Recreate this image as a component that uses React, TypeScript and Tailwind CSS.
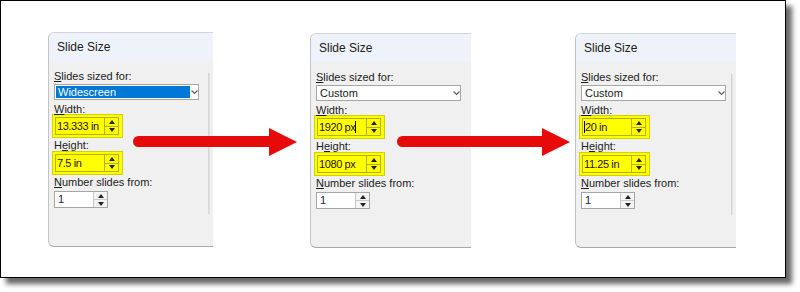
import React from "react";

const font = { fontFamily: '"Segoe UI", "Liberation Sans", Arial, sans-serif' };

function Spinner({ olive }: { olive?: boolean }) {
  return (
    <div
      className={`w-[14px] h-full flex flex-col border-l ${
        olive ? "border-[#b4b400]" : "border-[#c8c8c8] bg-[#f4f4f4]"
      }`}
    >
      <div className="flex-1 flex items-center justify-center">
        <svg width="6" height="4" viewBox="0 0 6 4">
          <path d="M0 4 L3 0 L6 4 Z" fill="#222" />
        </svg>
      </div>
      <div className={`h-px ${olive ? "bg-[#b4b400]" : "bg-[#c8c8c8]"}`} />
      <div className="flex-1 flex items-center justify-center">
        <svg width="6" height="4" viewBox="0 0 6 4">
          <path d="M0 0 L3 4 L6 0 Z" fill="#222" />
        </svg>
      </div>
    </div>
  );
}

function Caret() {
  return <span className="inline-block w-px h-[12px] bg-black align-middle" />;
}

function Label({ children }: { children: React.ReactNode }) {
  return <div className="h-[14px] leading-[14px] text-[11px] text-[#1b1b1b]">{children}</div>;
}

function HighlightField({
  value,
  caret,
}: {
  value: string;
  caret?: "start" | "end";
}) {
  return (
    <div className="-ml-[2px] w-[71px] h-[24px] bg-[#ffff00] border border-[#d2d200] pl-[2px] pt-[2px]">
      <div className="w-[64px] h-[18px] border border-[#b4b400] flex">
        <div className="flex-1 flex items-center pl-[1px] text-[11px] tracking-[-0.4px] text-[#2a1200]">
          {caret === "start" && <Caret />}
          <span>{value}</span>
          {caret === "end" && <Caret />}
        </div>
        <Spinner olive />
      </div>
    </div>
  );
}

function SlideSizePanel({
  preset,
  width,
  height,
  selected,
  caret,
  panelWidth,
  divider,
}: {
  preset: string;
  width: string;
  height: string;
  selected?: boolean;
  caret?: "start" | "end";
  panelWidth: string;
  divider?: boolean;
}) {
  return (
    <div
      className={`relative ${panelWidth} h-[215px] bg-[#f0f0f0] border-t border-l border-b border-t-[#d4d4d4] border-l-[#c4c4c4] border-b-[#a8a8a8] rounded-l-[6px] overflow-hidden`}
    >
      <div className="h-[28px] bg-[#eef2fa] pl-[8px] pt-[7px] text-[12px] leading-[14px] text-[#202020]">
        Slide Size
      </div>
      {divider && (
        <div className="absolute right-[3px] top-[40px] w-[2px] h-[141px] bg-[#e2e2e2] border-l border-[#d6d6d6]" />
      )}
      <div className="pl-[5px] pt-[8px]">
        <Label>
          <span className="underline">S</span>lides sized for:
        </Label>
        <div className="mt-[1px] w-[145px] h-[16px] bg-white border border-[#a6a6a6] flex items-center">
          <div
            className={`w-[134px] h-[12px] ml-[1px] flex items-center pl-[2px] text-[11px] ${
              selected ? "bg-[#0078d7] text-white" : "text-[#1b1b1b]"
            }`}
          >
            {preset}
          </div>
          <div className="flex-1 flex items-center justify-center">
            <svg width="7" height="5" viewBox="0 0 7 5">
              <path d="M0.5 0.5 L3.5 3.5 L6.5 0.5" stroke="#606060" strokeWidth="1.2" fill="none" />
            </svg>
          </div>
        </div>
        <div className="mt-[2px]">
          <Label>
            <span className="underline">W</span>idth:
          </Label>
        </div>
        <div className="-mt-[2px]">
          <HighlightField value={width} caret={caret} />
        </div>
        <Label>
          H<span className="underline">e</span>ight:
        </Label>
        <div className="-mt-[1px]">
          <HighlightField value={height} />
        </div>
        <Label>
          <span className="underline">N</span>umber slides from:
        </Label>
        <div className="mt-[2px] w-[54px] h-[17px] bg-white border border-[#a6a6a6] flex">
          <div className="flex-1 flex items-center pl-[3px] text-[11px] text-[#1a1a3a]">1</div>
          <Spinner />
        </div>
      </div>
    </div>
  );
}

function Arrow({ length, head }: { length: number; head: number }) {
  return (
    <svg width={length} height="30" viewBox={`0 0 ${length} 30`}>
      <path
        d={`M5.5 9 L${length - head} 9 L${length - head} 1 L${length} 15 L${length - head} 29 L${length - head} 20 L5.5 20 A5.5 5.5 0 0 1 5.5 9 Z`}
        fill="#e60a0a"
      />
    </svg>
  );
}

export default function App() {
  return (
    <div className="w-[800px] h-[292px] bg-white" style={font}>
      <div className="relative w-[786px] h-[278px] bg-white border border-black shadow-[6px_6px_5px_rgba(0,0,0,0.6)] flex items-start pt-[31px]">
        <div className="ml-[47px]">
          <SlideSizePanel preset="Widescreen" width="13.333 in" height="7.5 in" selected divider panelWidth="w-[165px]" />
        </div>
        <div className="ml-[97px] mt-[1px]">
          <SlideSizePanel preset="Custom" width="1920 px" height="1080 px" caret="end" panelWidth="w-[161px]" />
        </div>
        <div className="ml-[104px] mt-[1px]">
          <SlideSizePanel preset="Custom" width="20 in" height="11.25 in" caret="start" divider panelWidth="w-[161px]" />
        </div>
        <div className="absolute left-[132px] top-[126px]">
          <Arrow length={164} head={28} />
        </div>
        <div className="absolute left-[396px] top-[126px]">
          <Arrow length={173} head={28} />
        </div>
      </div>
    </div>
  );
}
